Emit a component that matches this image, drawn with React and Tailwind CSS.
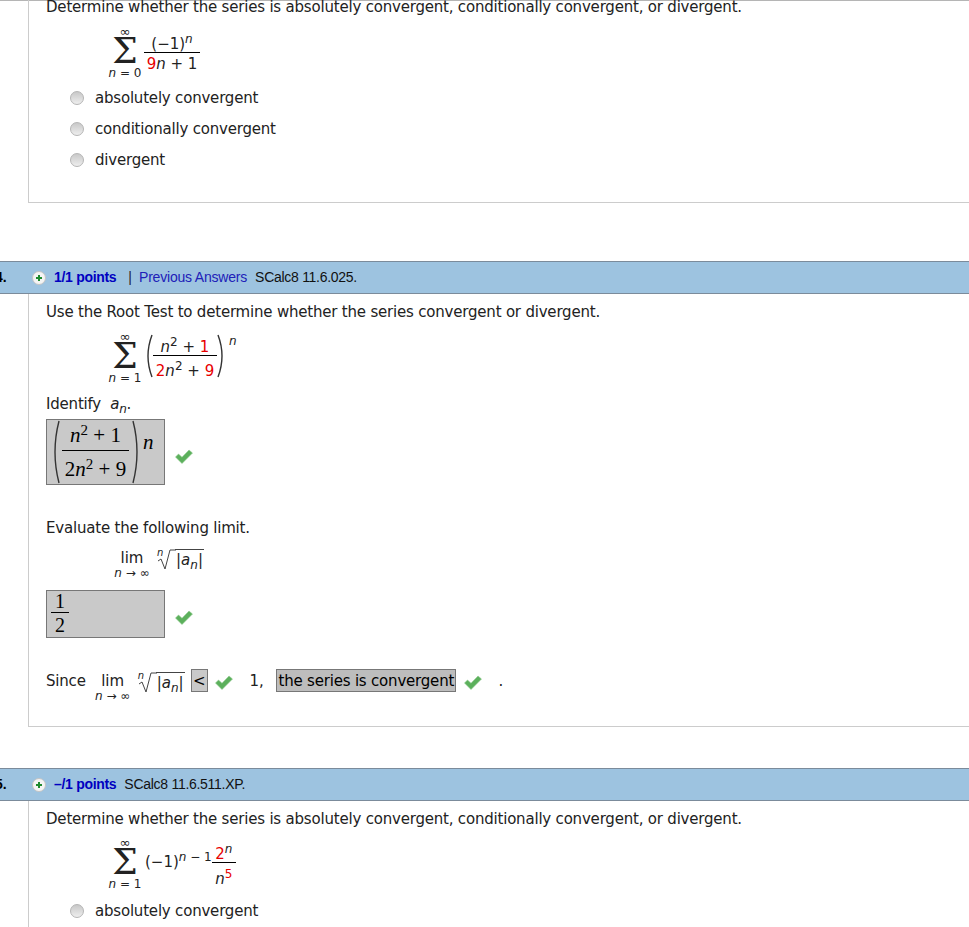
import React from 'react';

const VERDANA = "font-['DejaVu_Sans',sans-serif]";
const SERIF = "font-['Liberation_Serif',serif]";

const Check = ({ className = '' }) => (
  <svg width="18" height="15" viewBox="0 0 18 15" className={`shrink-0 ${className}`}>
    <path d="M0.5 8 L3.5 5 L7 8.2 L14 1 L17.5 4 L7 14.5 Z" fill="#5cb05c" stroke="#8ec98e" strokeWidth="0.6" />
  </svg>
);

const PlusBadge = () => (
  <span className="flex h-[14px] w-[14px] shrink-0 items-center justify-center rounded-full border border-[#c4c4c4] bg-[#f4f4f4]">
    <svg width="8" height="8" viewBox="0 0 8 8">
      <path d="M4 1 V7 M1 4 H7" stroke="#1e8a2e" strokeWidth="2" />
    </svg>
  </span>
);

const Radio = ({ label }) => (
  <div className="flex h-[31px] items-center pl-[24px]">
    <span className="mb-[2px] h-[14px] w-[14px] shrink-0 rounded-full border border-[#b5b5b5] bg-gradient-to-b from-[#c8c8c8] to-[#eeeeee]" />
    <span className="ml-[11px] text-[#222]">{label}</span>
  </div>
);

const N = ({ children = 'n', className = '' }) => <i className={className}>{children}</i>;

// sum sign with limits above and below
const Sum = ({ from }) => (
  <div className="flex w-[34px] shrink-0 flex-col items-center tracking-normal">
    <span className="h-[9px] text-[13px] leading-[9px]">∞</span>
    <span className="h-[29px] font-['DejaVu_Serif',serif] text-[36px] leading-[29px]">Σ</span>
    <span className="mt-[2px] whitespace-nowrap text-[12px] leading-[13px]">
      <N /> = {from}
    </span>
  </div>
);

const Frac = ({ top, bottom, className = '', bottomClass = 'pt-[2px]' }) => (
  <div className={`flex flex-col items-center tracking-normal ${className}`}>
    <div className="w-full whitespace-nowrap border-b border-black pt-[2px] text-center leading-[16px]">{top}</div>
    <div className={`w-full whitespace-nowrap text-center leading-[19px] ${bottomClass}`}>{bottom}</div>
  </div>
);

const Sup = ({ children, className = '' }) => (
  <sup className={`top-[-6px] text-[12px] leading-none ${className}`}>{children}</sup>
);

const Sub = () => (
  <sub className="bottom-[-4px] text-[12px] leading-none">
    <i>n</i>
  </sub>
);

const Red = ({ children }) => <span className="text-[#e80000]">{children}</span>;

const Paren = ({ flip = false, h = 44, className = '' }) => (
  <svg width="10" height={h} viewBox={`0 0 10 ${h}`} className={`shrink-0 ${flip ? '-scale-x-100' : ''} ${className}`}>
    <path d={`M9 1 Q1 ${h / 2} 9 ${h - 1}`} fill="none" stroke="#333" strokeWidth="1.4" />
  </svg>
);

const Limit = ({ className = '' }) => (
  <div className={`flex items-start tracking-normal ${className}`}>
    <div className="flex w-[38px] shrink-0 flex-col items-center">
      <span className="leading-[18px]">lim</span>
      <span className="mt-[1px] whitespace-nowrap text-[12px] leading-[11px]">
        <N /> → ∞
      </span>
    </div>
    <div className="relative ml-[5px] flex h-[22px] items-start pl-[19px]">
      <i className="absolute left-[1px] top-[-1px] text-[10px] leading-[10px]">n</i>
      <svg width="20" height="22" viewBox="0 0 20 22" className="absolute left-0 top-0">
        <path d="M2 12 L5 10 L9 20 L14 1 H20" fill="none" stroke="#444" strokeWidth="1" />
      </svg>
      <span className="whitespace-nowrap border-t border-[#444] px-[1px] leading-[20px]">
        |<i>a</i>
        <Sub />|
      </span>
    </div>
  </div>
);

const Header = ({ num, points, links, code }) => (
  <div className="flex h-[33px] items-center overflow-hidden border-y border-[#7b8b9b] bg-[#9dc3e0] font-['Liberation_Sans',sans-serif] text-[14px] tracking-normal">
    <b className="ml-[-5px] w-[37px] shrink-0 text-black">{num}</b>
    <PlusBadge />
    <b className="ml-[8px] tracking-[-0.3px] text-[#0000c0]">{points}</b>
    {links && (
      <>
        <span className="ml-[12px] text-[#223]">|</span>
        <span className="ml-[7px] tracking-[-0.2px] text-[#2020b8]">{links}</span>
      </>
    )}
    <span className="ml-[8px] tracking-[-0.28px] text-[#111]">{code}</span>
  </div>
);

export default function App() {
  return (
    <div className={`h-[927px] w-[969px] overflow-hidden bg-white text-[15px] tracking-[-0.2px] text-[#222] ${VERDANA}`}>
      {/* question 3, cut off at the top */}
      <div className="border-t border-[#b5b5b5]">
        <div className="ml-[28px] h-[205px] border-b border-l border-[#cccccc] pl-[17px]">
          <p className="mt-[-3px] h-[21px] whitespace-nowrap leading-[18px]">
            Determine whether the series is absolutely convergent, conditionally convergent, or divergent.
          </p>
          <div className="ml-[62px] mt-[8px] flex h-[52px] items-start">
            <Sum from="0" />
            <Frac
              className="ml-[2px] mt-[7px] w-[56px]"
              top={<>(−1)<Sup><N /></Sup></>}
              bottom={<><Red>9</Red><N /> + 1</>}
            />
          </div>
          <div className="mt-[4px]">
            <Radio label="absolutely convergent" />
            <Radio label="conditionally convergent" />
            <Radio label="divergent" />
          </div>
        </div>
      </div>

      {/* question 4 */}
      <div className="mt-[58px]">
        <Header num="4." points="1/1 points" links="Previous Answers" code="SCalc8 11.6.025." />
        <div className="ml-[28px] h-[433px] border-b border-l border-[#cccccc] pl-[17px]">
          <p className="pt-[9px] leading-[18px]">Use the Root Test to determine whether the series convergent or divergent.</p>
          <div className="ml-[62px] mt-[11px] flex h-[52px] items-start">
            <Sum from="1" />
            <div className="ml-[1px] mt-[2px] flex items-start">
              <Paren />
              <div className="mt-[3px]">
                <Frac
                  className="w-[64px]"
                  bottomClass="pt-[6px]"
                  top={<><N /><Sup>2</Sup> + <Red>1</Red></>}
                  bottom={<><Red>2</Red><N /><Sup>2</Sup> + <Red>9</Red></>}
                />
              </div>
              <Paren flip />
            </div>
            <Sup className="ml-[2px] mt-[9px]"><N /></Sup>
          </div>
          <p className="mt-[11px] leading-[18px]">
            Identify&nbsp; <i>a</i>
            <Sub />.
          </p>
          <div className="mt-[6px] flex items-center">
            <div className={`flex h-[66px] w-[119px] items-center overflow-hidden border border-[#777] bg-[#c9c9c9] pl-[3px] text-[21px] tracking-normal text-black ${SERIF}`}>
              <Paren h={64} />
              <div className="ml-[2px] mt-[3px] flex w-[67px] flex-col items-center">
                <div className="w-full border-b border-black text-center leading-[30px]">
                  <i>n</i>
                  <sup className="text-[15px]">2</sup> + 1
                </div>
                <div className="w-full text-center leading-[36px]">
                  2<i>n</i>
                  <sup className="text-[15px]">2</sup> + 9
                </div>
              </div>
              <Paren flip h={64} className="ml-[3px]" />
              <i className="mb-[18px] ml-[1px]">n</i>
            </div>
            <Check className="ml-[10px] mt-[9px]" />
          </div>
          <p className="mt-[34px] leading-[18px]">Evaluate the following limit.</p>
          <Limit className="ml-[67px] mt-[12px]" />
          <div className="mt-[11px] flex items-center">
            <div className={`h-[48px] w-[119px] border border-[#777] bg-[#c9c9c9] pl-[4px] text-[20px] tracking-normal text-black ${SERIF}`}>
              <div className="w-[18px] border-b border-black text-center leading-[21px]">1</div>
              <div className="w-[18px] text-center leading-[25px]">2</div>
            </div>
            <Check className="ml-[10px] mt-[7px]" />
          </div>
          <div className="mt-[31px] flex items-start">
            <span className="leading-[24px]">Since</span>
            <Limit className="ml-[8px] mt-[3px]" />
            <span className="ml-[6px] h-[23px] w-[17px] border border-[#777] bg-[#c9c9c9] text-center leading-[22px] text-black">&lt;</span>
            <Check className="ml-[7px] mt-[6px]" />
            <span className="ml-[17px] leading-[24px]">1,</span>
            <span className="ml-[12px] h-[23px] w-[180px] whitespace-nowrap border border-[#777] bg-[#bdbdbd] pl-[2px] leading-[22px] text-black">
              the series is convergent
            </span>
            <Check className="ml-[8px] mt-[6px]" />
            <span className="ml-[17px] leading-[24px]">.</span>
          </div>
        </div>
      </div>

      {/* question 5 */}
      <div className="mt-[41px]">
        <Header num="5." points="–/1 points" code="SCalc8 11.6.511.XP." />
        <div className="ml-[28px] h-[200px] border-l border-[#cccccc] pl-[17px]">
          <p className="pt-[9px] leading-[18px]">
            Determine whether the series is absolutely convergent, conditionally convergent, or divergent.
          </p>
          <div className="ml-[62px] mt-[10px] flex h-[52px] items-start">
            <Sum from="1" />
            <span className="ml-[3px] mt-[15px] whitespace-nowrap leading-[18px] tracking-normal">
              (−1)
              <Sup><N /> − 1</Sup>
            </span>
            <Frac
              className="mt-[6px] w-[24px]"
              bottomClass="pt-[7px]"
              top={<><Red>2</Red><Sup><N /></Sup></>}
              bottom={<><N /><Sup><Red>5</Red></Sup></>}
            />
          </div>
          <div className="mt-[6px]">
            <Radio label="absolutely convergent" />
          </div>
        </div>
      </div>
    </div>
  );
}
